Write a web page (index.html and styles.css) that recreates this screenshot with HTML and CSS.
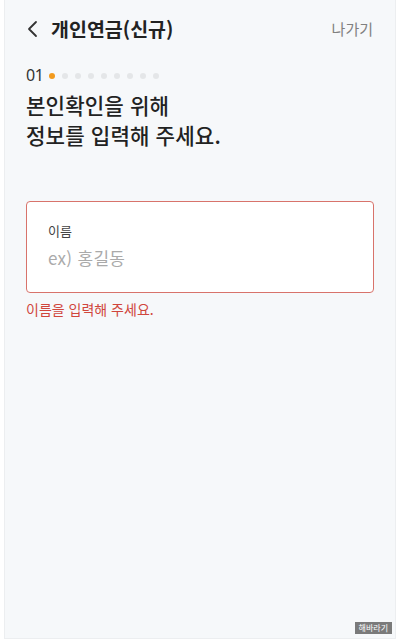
FILE: index.html
```html
<!doctype html>
<html lang="ko">
<head>
<meta charset="utf-8" />
<title>개인연금(신규)</title>
<meta name="viewport" content="width=device-width, initial-scale=1" />
<link rel="stylesheet" href="styles.css">
</head>
<body>
  <div class="screen">
    <!-- 상단 바 -->
    <header class="topbar">
      <div class="topbar-left">
        <svg class="back" width="14" height="18" viewBox="0 0 14 18" aria-hidden="true">
          <path d="M10 2 L3 9 L10 16" fill="none" stroke="#333" stroke-width="1.8" stroke-linecap="round" stroke-linejoin="round"/>
        </svg>
        <h1 class="title">개인연금(신규)</h1>
      </div>
      <a class="exit">나가기</a>
    </header>

    <!-- 단계 -->
    <div class="step">
      <span class="step-no">01</span>
      <ul class="dots">
        <li class="on"></li><li></li><li></li><li></li><li></li><li></li><li></li><li></li><li></li>
      </ul>
    </div>

    <h2 class="heading">본인확인을 위해<br>정보를 입력해 주세요.</h2>

    <!-- 입력 -->
    <div class="field error">
      <label class="field-label">이름</label>
      <div class="field-input">ex) 홍길동</div>
    </div>
    <p class="error-msg">이름을 입력해 주세요.</p>

    <span class="mark">해바라기</span>
  </div>
</body>
</html>
```

FILE: styles.css
```css
*{margin:0;padding:0;box-sizing:border-box}
html,body{height:100%}
body{
  background:#fff;padding:0 4px 4px 4px;
  font-family:"Noto Sans CJK KR","Noto Sans",sans-serif;color:#222;
}

/* === 화면 틀 === */
.screen{
  position:relative;height:100%;
  background:#f6f8fa;border:1px solid #eceef0;border-top:none;
  padding:0 21px 0 21px;
}

/* === 상단 바 === */
.topbar{
  display:flex;justify-content:space-between;align-items:center;
  height:56px;padding-top:1px;
}
.topbar-left{display:flex;align-items:center;gap:11px}
.back{display:block;margin-left:0}
.title{font-size:19.5px;font-weight:700;color:#222}
.exit{font-size:15px;color:#808080;margin-right:1px}

/* === 단계 표시 === */
.step{display:flex;align-items:center;margin-top:8px;height:22px}
.step-no{font-size:16px;color:#333;font-family:"Noto Sans",sans-serif;letter-spacing:-0.3px}
.dots{display:flex;list-style:none;gap:7px;margin-left:5px;margin-top:1px}
.dots li{width:6px;height:6px;border-radius:50%;background:#e4e6e8}
.dots li.on{background:#f29a1d}

/* === 안내 문구 === */
.heading{
  margin-top:4px;font-size:21.2px;font-weight:500;line-height:30px;color:#222;
  letter-spacing:0.1px;
}

/* === 입력 필드 === */
.field{
  margin-top:51px;background:#fff;border:1px solid #e5e7ea;border-radius:4px;
  height:92px;padding:20px 21px 0;
}
.field.error{border-color:#d8736b}
.field-label{display:block;font-size:13px;color:#444;line-height:18px}
.field-input{margin-top:6px;font-size:17px;color:#aaa;line-height:24px;letter-spacing:0.3px}
.error-msg{margin-top:5px;font-size:14px;color:#d0463c;line-height:22px}

/* === 워터마크 === */
.mark{
  position:absolute;right:3px;bottom:4px;
  background:#7a7a7a;color:#fff;font-size:8px;line-height:12px;padding:0 4px;
}
```
